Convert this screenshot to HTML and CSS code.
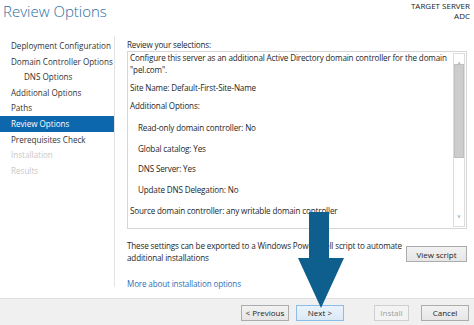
FILE: index.html
```html
<!DOCTYPE html>
<html>
<head>
<meta charset="utf-8">
<link rel="stylesheet" href="styles.css">
</head>
<body>
<div class="window">
  <header class="header">
    <h1 class="title">Review Options</h1>
    <div class="target">TARGET SERVER<br>ADC</div>
  </header>
  <div class="main">
    <nav class="nav">
      <div class="nav-item">Deployment Configuration</div>
      <div class="nav-item">Domain Controller Options</div>
      <div class="nav-item sub">DNS Options</div>
      <div class="nav-item">Additional Options</div>
      <div class="nav-item">Paths</div>
      <div class="nav-item active">Review Options</div>
      <div class="nav-item">Prerequisites Check</div>
      <div class="nav-item disabled">Installation</div>
      <div class="nav-item disabled">Results</div>
    </nav>
    <section class="content">
      <div class="label">Review your selections:</div>
      <div class="box">
        <div class="box-text">
          <p class="l1">Configure this server as an additional Active Directory domain controller for the domain "pel.com".</p>
          <p class="l2">Site Name: Default-First-Site-Name</p>
          <p class="l3">Additional Options:</p>
          <p class="ind l4">Read-only domain controller: No</p>
          <p class="ind l5">Global catalog: Yes</p>
          <p class="ind l5">DNS Server: Yes</p>
          <p class="ind l5">Update DNS Delegation: No</p>
          <p class="l6">Source domain controller: any writable domain controller</p>
        </div>
        <div class="scrollbar">
          <div class="sb-btn">&#x2038;</div>
          <div class="sb-track"><div class="sb-thumb"></div></div>
          <div class="sb-btn down">&#x2038;</div>
        </div>
      </div>
      <div class="export-row">
        <div class="export-text">These settings can be exported to a Windows PowerShell script to automate additional installations</div>
        <button class="btn view">View script</button>
      </div>
      <a class="link">More about installation options</a>
    </section>
  </div>
  <footer class="footer">
    <button class="btn">&lt; Previous</button>
    <button class="btn next">Next &gt;</button>
    <button class="btn install" disabled>Install</button>
    <button class="btn">Cancel</button>
  </footer>
  <svg class="arrow" width="60" height="100" viewBox="0 0 60 100">
    <polygon points="14,0 34,0 34,46 49,46 26,96 3,46 14,46" fill="#0f5f8e"/>
  </svg>
</div>
</body>
</html>
```
FILE: styles.css
```css
* { box-sizing: border-box; }
html, body { margin: 0; padding: 0; }
body {
  width: 474px;
  height: 325px;
  overflow: hidden;
  background: #fff;
  font-family: "Open Sans", "Noto Sans", sans-serif;
  color: #262626;
}
.window {
  position: relative;
  width: 474px;
  height: 325px;
  display: flex;
  flex-direction: column;
}
.header {
  height: 36px;
  display: flex;
  justify-content: space-between;
  align-items: flex-start;
}
.title {
  margin: 0;
  padding: 0 0 0 3px;
  font-weight: 300;
  font-size: 15px;
  line-height: 22px;
  color: #2b6ea3;
}
.target {
  font-size: 8px;
  line-height: 10px;
  text-align: right;
  padding: 1px 4px 0 0;
  color: #222;
}
.main {
  flex: 1;
  display: flex;
  min-height: 0;
}
.nav {
  width: 115px;
  flex: none;
  border-right: 1px solid #e3e3e3;
  padding-top: 2px;
  margin-bottom: 11px;
  font-size: 8.1px;
}
.nav-item {
  height: 15.6px;
  line-height: 15.6px;
  padding-left: 11px;
  white-space: nowrap;
  color: #333;
}
.nav-item.sub { padding-left: 24px; }
.nav-item.active { background: #0d67ad; color: #fff; }
.nav-item.disabled { color: #c8c8c8; }
.content {
  flex: 1;
  min-width: 0;
  padding: 3px 7px 0 12px;
  font-size: 8.1px;
  letter-spacing: -0.15px;
  display: flex;
  flex-direction: column;
}
.label { line-height: 12px; }
.box {
  margin-top: 0;
  height: 178px;
  border: 1px solid #d6d6d6;
  display: flex;
}
.box-text {
  flex: 1;
  min-width: 0;
  padding: 0 2px 0 2px;
  line-height: 12px;
}
.box-text p { margin: 0; }
.box-text .l1 { margin-top: 0; }
.box-text .l2 { margin-top: 6px; }
.box-text .l3 { margin-top: 6px; }
.box-text .l4 { margin-top: 10px; }
.box-text .l5 { margin-top: 8.5px; }
.box-text .l6 { margin-top: 9px; }
.box-text .ind { padding-left: 8px; }
.scrollbar {
  width: 12px;
  flex: none;
  margin: 1px 1px 1px 0;
  border: 1px solid #dcdcdc;
  display: flex;
  flex-direction: column;
  background: #fff;
}
.sb-btn {
  height: 10px;
  font-size: 8px;
  line-height: 12px;
  text-align: center;
  color: #7a7a7a;
}
.sb-btn.down { transform: rotate(180deg); }
.sb-track { flex: 1; }
.sb-thumb {
  height: 94px;
  background: #cdcdcd;
  border: 1px solid #bfbfbf;
}
.export-row {
  margin-top: 11px;
  display: flex;
  align-items: flex-start;
  justify-content: space-between;
}
.export-text {
  flex: 1;
  max-width: 300px;
  line-height: 12px;
}
.btn {
  font-family: inherit;
  font-size: 8px;
  color: #222;
  background: linear-gradient(#f2f2f2, #e6e6e6);
  border: 1px solid #acacac;
  height: 16px;
  padding: 0;
  width: 49px;
}
.btn.view { width: 61px; margin-top: 6px; flex: none; }
.link {
  margin-top: 14px;
  color: #2f6fb6;
  line-height: 12px;
}
.footer {
  height: 27px;
  background: #f0f0f0;
  border-top: 1px solid #dedede;
  display: flex;
  align-items: center;
  padding: 1px 5px 0 241px;
  gap: 7px;
}
.btn.next { border-color: #8cbde7; background: linear-gradient(#eaf3fb, #dbe9f6); }
.btn.install { margin-left: 23px; color: #a0a0a0; border-color: #cfcfcf; background: #f3f3f3; width: 36px; margin-right: 5px; }
.arrow {
  position: absolute;
  left: 295px;
  top: 212px;
}
```
